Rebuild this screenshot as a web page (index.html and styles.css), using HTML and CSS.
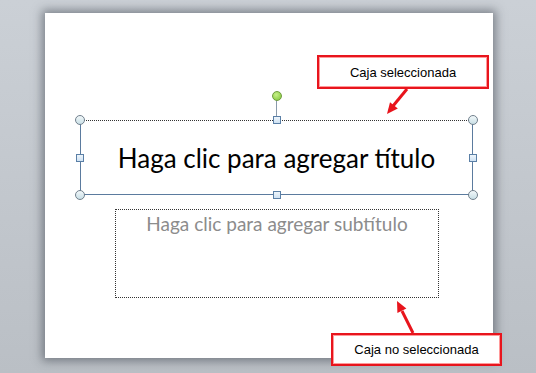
FILE: index.html
```html
<!DOCTYPE html>
<html lang="es">

<head>
    <meta charset="UTF-8">
    <title>Cajas de texto</title>
    <link rel="stylesheet" href="styles.css">
</head>

<body>
    <div class="slide">
        <!-- caja seleccionada, con sus controladores -->
        <div class="title-box">
            <span class="rotate-line"></span>
            <span class="rotate"></span>
            <span class="corner tl"></span>
            <span class="corner tr"></span>
            <span class="corner bl"></span>
            <span class="corner br"></span>
            <span class="side tm"></span>
            <span class="side bm"></span>
            <span class="side ml"></span>
            <span class="side mr"></span>
            <p>Haga clic para agregar título</p>
        </div>

        <!-- caja no seleccionada -->
        <div class="subtitle-box">
            <p>Haga clic para agregar subtítulo</p>
        </div>
    </div>

    <div class="callout callout-top">Caja seleccionada</div>
    <div class="callout callout-bottom">Caja no seleccionada</div>

    <svg class="arrows" width="536" height="373" viewBox="0 0 536 373">
        <line x1="407" y1="89" x2="393" y2="106" />
        <polygon points="387,114 397.8,108.5 390,102.3" />
        <line x1="413" y1="333" x2="402" y2="311" />
        <polygon points="397,301 406.4,308.6 397.4,313" />
    </svg>
</body>

</html>
```

FILE: styles.css
```css
body {
    margin: 0;
    width: 536px;
    height: 373px;
    overflow: hidden;
    position: relative;
    box-sizing: border-box;
    padding: 13px 0 0 45px;
    background: linear-gradient(#cbd0d6, #babfc5);
    font-family: "Liberation Sans", Arial, sans-serif;
}

.slide {
    width: 448px;
    height: 345px;
    box-sizing: border-box;
    padding-top: 107px;
    background-color: white;
    box-shadow: 0 0 9px 3px rgba(50, 55, 65, 0.5);
}

.title-box {
    position: relative;
    margin-left: 35px;
    width: 393px;
    height: 75px;
    box-sizing: border-box;
    border: 1px solid #5b7b9e;
    border-top: 1px dotted #333;
    display: flex;
    justify-content: center;
    align-items: center;
}

.title-box p {
    margin: 0;
    font-family: Lato, "Open Sans", sans-serif;
    font-size: 26px;
    color: #000;
}

.corner,
.side,
.rotate {
    position: absolute;
    box-sizing: border-box;
}

.corner {
    width: 10px;
    height: 10px;
    border-radius: 50%;
    border: 1px solid #71808d;
    background: linear-gradient(#f2f8fa, #c9dfe6);
}

.tl { left: -6px; top: -6px; }
.tr { right: -6px; top: -6px; }
.bl { left: -6px; bottom: -6px; }
.br { right: -6px; bottom: -6px; }

.side {
    width: 8px;
    height: 8px;
    border: 1px solid #5a7fa6;
    background: linear-gradient(#eef5fb, #cfe2f3);
}

.tm { left: calc(50% - 4px); top: -5px; }
.bm { left: calc(50% - 4px); bottom: -5px; }
.ml { left: -5px; top: calc(50% - 4px); }
.mr { right: -5px; top: calc(50% - 4px); }

.rotate {
    width: 10px;
    height: 10px;
    left: calc(50% - 5px);
    top: -30px;
    border-radius: 50%;
    border: 1px solid #6f9c3e;
    background: radial-gradient(circle at 40% 35%, #c8f08a, #7cc434);
}

.rotate-line {
    position: absolute;
    left: calc(50% - 1px);
    top: -21px;
    width: 1px;
    height: 17px;
    background-color: #8a9aab;
}

.subtitle-box {
    margin: 14px 0 0 70px;
    width: 324px;
    height: 89px;
    box-sizing: border-box;
    border: 1px dotted #333;
    text-align: center;
}

.subtitle-box p {
    margin: 2px 0 0;
    font-family: Lato, "Open Sans", sans-serif;
    font-size: 19px;
    color: #8c8c8c;
}

.callout {
    position: absolute;
    box-sizing: border-box;
    border: 2px solid #e8151d;
    box-shadow: inset 0 0 0 1px #ff9a9a;
    background-color: white;
    font-size: 13px;
    color: #000;
    display: flex;
    justify-content: center;
    align-items: center;
}

.callout-top {
    left: 317px;
    top: 55px;
    width: 172px;
    height: 34px;
}

.callout-bottom {
    left: 331px;
    top: 333px;
    width: 171px;
    height: 33px;
}

.arrows {
    position: absolute;
    left: 0;
    top: 0;
}

.arrows line {
    stroke: #e8141c;
    stroke-width: 3;
}

.arrows polygon {
    fill: #e8141c;
}
```
